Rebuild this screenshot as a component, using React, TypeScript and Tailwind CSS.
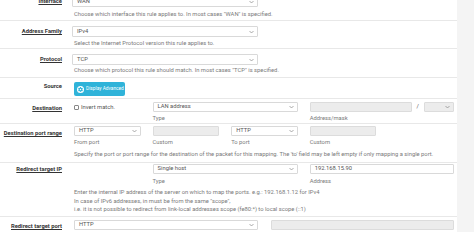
import React from "react";
import { FaCog } from "react-icons/fa";

const Chevron = () => (
  <svg width="5" height="4" viewBox="0 0 10 6" className="shrink-0">
    <path d="M1 1 L5 5 L9 1" fill="none" stroke="#888" strokeWidth="1.4" />
  </svg>
);

const Select = ({ text, w, h = 10, cls = "" }: { text: string; w: string; h?: number; cls?: string }) => (
  <div
    className={`flex items-center justify-between border border-[#d9d9d9] rounded-[1px] pl-[4px] pr-[3px] text-[#555] bg-white ${w} ${cls}`}
    style={{ height: h }}
  >
    <span className="leading-none">{text}</span>
    <Chevron />
  </div>
);

const Disabled = ({ w, cls = "" }: { w: string; cls?: string }) => (
  <div className={`h-[10px] shrink-0 border border-[#dcdcdc] rounded-[1px] bg-[#ececec] ${w} ${cls}`} />
);

const Label = ({ text, pt, u = true }: { text: string; pt: string; u?: boolean }) => (
  <div className={`w-[68px] shrink-0 pr-[6px] text-right font-bold text-[#333] leading-[8px] whitespace-nowrap ${pt}`}>
    <span className={u ? "underline decoration-[0.5px] underline-offset-[1px]" : ""}>{text}</span>
  </div>
);

const Help = ({ children, cls = "" }: { children: React.ReactNode; cls?: string }) => (
  <div className={`text-[#7a7a7a] leading-[8px] whitespace-nowrap ${cls}`}>{children}</div>
);

export default function App() {
  return (
    <div
      className="w-[474px] h-[232px] overflow-hidden flex text-[5.8px] bg-[#f4f4f4]"
      style={{ fontFamily: "Roboto, 'Noto Sans', sans-serif" }}
    >
      <div className="w-[457px] shrink-0 bg-white flex flex-col overflow-hidden">
        {/* Interface */}
        <div className="flex h-[31px] -mt-[10px] shrink-0 border-b border-[#e8e8e8]">
          <Label text="Interface" pt="pt-[7px]" />
          <div className="pt-[6px] pl-[4px]">
            <Select text="WAN" w="w-[186px]" h={11} />
            <Help cls="mt-[3px] pl-[2px]">Choose which interface this rule applies to. In most cases "WAN" is specified.</Help>
          </div>
        </div>
        {/* Address Family */}
        <div className="flex h-[28px] shrink-0 border-b border-[#e8e8e8]">
          <Label text="Address Family" pt="pt-[6px]" />
          <div className="pt-[5px] pl-[4px]">
            <Select text="IPv4" w="w-[186px]" h={11} />
            <Help cls="mt-[2px] pl-[2px]">Select the Internet Protocol version this rule applies to.</Help>
          </div>
        </div>
        {/* Protocol */}
        <div className="flex h-[29px] shrink-0 border-b border-[#e8e8e8]">
          <Label text="Protocol" pt="pt-[6px]" />
          <div className="pt-[5px] pl-[4px]">
            <Select text="TCP" w="w-[186px]" h={11} />
            <Help cls="mt-[1px] pl-[2px]">Choose which protocol this rule should match. In most cases "TCP" is specified.</Help>
          </div>
        </div>
        {/* Source */}
        <div className="flex h-[21px] shrink-0 border-b border-[#e8e8e8]">
          <Label text="Source" pt="pt-[4px]" u={false} />
          <div className="pt-[4px] pl-[6px]">
            <div className="h-[14px] w-[51px] rounded-[2px] bg-[#2fb3d9] flex items-center gap-[2px] pl-[3px] text-white whitespace-nowrap">
              <span className="w-[7px] h-[7px] shrink-0 rounded-full bg-white flex items-center justify-center">
                <FaCog className="text-[#2fb3d9]" style={{ width: 5, height: 5 }} />
              </span>
              <span className="leading-none text-[4.8px]">Display Advanced</span>
            </div>
          </div>
        </div>
        {/* Destination */}
        <div className="flex h-[25px] shrink-0 border-b border-[#e8e8e8]">
          <Label text="Destination" pt="pt-[5px]" />
          <div className="flex pt-[3px] shrink-0">
            <div className="w-[78.6px] shrink-0 px-[6px] flex items-start pt-[1px]">
              <div className="flex items-center gap-[2px] h-[8px] text-[#555] whitespace-nowrap">
                <span className="w-[5px] h-[5px] border border-[#888] rounded-[1px] bg-white" />
                <span>Invert match.</span>
              </div>
            </div>
            <div className="w-[157.2px] shrink-0 px-[6px]">
              <Select text="LAN address" w="w-full" />
              <Help cls="mt-[2px]">Type</Help>
            </div>
            <div className="w-[157.2px] shrink-0 px-[6px]">
              <div className="flex items-center">
                <Disabled w="w-[102px]" />
                <span className="w-[12px] shrink-0 text-center text-[#555] leading-none">/</span>
                <div className="h-[10px] w-[30px] shrink-0 border border-[#dcdcdc] rounded-[1px] bg-[#ececec] flex items-center justify-end pr-[3px]">
                  <Chevron />
                </div>
              </div>
              <Help cls="mt-[2px]">Address/mask</Help>
            </div>
          </div>
        </div>
        {/* Destination port range */}
        <div className="flex h-[39px] shrink-0 border-b border-[#e8e8e8]">
          <Label text="Destination port range" pt="pt-[5px]" />
          <div className="pt-[2px] shrink-0">
            <div className="flex">
              <div className="w-[78.6px] shrink-0 px-[6px]">
                <Select text="HTTP" w="w-full" />
                <Help cls="mt-[2px]">From port</Help>
              </div>
              <div className="w-[78.6px] shrink-0 px-[6px]">
                <Disabled w="w-full" />
                <Help cls="mt-[2px]">Custom</Help>
              </div>
              <div className="w-[78.6px] shrink-0 px-[6px]">
                <Select text="HTTP" w="w-full" />
                <Help cls="mt-[2px]">To port</Help>
              </div>
              <div className="w-[78.6px] shrink-0 px-[6px]">
                <Disabled w="w-full" />
                <Help cls="mt-[2px]">Custom</Help>
              </div>
            </div>
            <Help cls="mt-[4px] pl-[6px]">
              Specify the port or port range for the destination of the packet for this mapping. The 'to' field may be left empty if only mapping a single port.
            </Help>
          </div>
        </div>
        {/* Redirect target IP */}
        <div className="flex h-[54px] shrink-0 border-b border-[#e8e8e8]">
          <Label text="Redirect target IP" pt="pt-[2px]" />
          <div className="pt-[1px] shrink-0">
            <div className="flex">
              <div className="w-[78.6px] shrink-0" />
              <div className="w-[157.2px] shrink-0 px-[6px]">
                <Select text="Single host" w="w-full" />
                <Help cls="mt-[3px]">Type</Help>
              </div>
              <div className="w-[157.2px] shrink-0 px-[6px]">
                <div className="h-[10px] w-[144px] border border-[#d9d9d9] rounded-[1px] bg-white flex items-center pl-[4px] text-[#555]">
                  <span className="leading-none">192.168.15.90</span>
                </div>
                <Help cls="mt-[3px]">Address</Help>
              </div>
            </div>
            <div className="mt-[3px] pl-[6px] text-[#7a7a7a] leading-[8.5px] whitespace-nowrap">
              <div>Enter the internal IP address of the server on which to map the ports. e.g.: 192.168.1.12 for IPv4</div>
              <div>In case of IPv6 addresses, in must be from the same "scope",</div>
              <div>i.e. it is not possible to redirect from link-local addresses scope (fe80:*) to local scope (::1)</div>
            </div>
          </div>
        </div>
        {/* Redirect target port */}
        <div className="flex h-[20px] shrink-0">
          <Label text="Redirect target port" pt="pt-[5px]" />
          <div className="pt-[3px] pl-[6px] flex shrink-0">
            <Select text="HTTP" w="w-[184px]" />
            <Disabled w="w-[183px]" cls="ml-[13px]" />
          </div>
        </div>
      </div>
      <div className="flex-1 bg-[#f4f4f4]" />
    </div>
  );
}
